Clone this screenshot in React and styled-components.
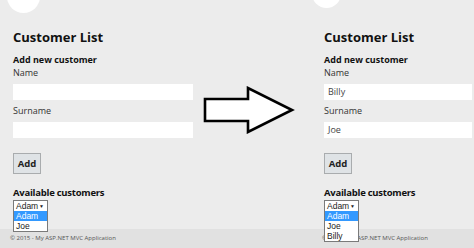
import React from 'react';
import styled, { createGlobalStyle } from 'styled-components';

const GlobalStyle = createGlobalStyle`
  html, body {
    margin: 0;
    padding: 0;
    background: #ececec;
  }
  body {
    font-family: "Open Sans", "Noto Sans", sans-serif;
    color: #111;
  }
`;

const Page = styled.div`
  display: grid;
  grid-template-columns: 200px 111px 1fr;
  grid-template-rows: 229px 19px;
  width: 474px;
  height: 248px;
  overflow: hidden;
  background: #ececec;
`;

const Panel = styled.div`
  display: flex;
  flex-direction: column;
  padding: 0 13px;
  position: relative;
  min-width: 0;
`;

const Header = styled.div`
  height: 13px;
  margin: 0 -13px;
  padding: 0 13px;
  overflow: hidden;
  flex-shrink: 0;
  display: flow-root;
`;

const Circle = styled.div`
  width: ${(p) => p.$size}px;
  height: ${(p) => p.$size}px;
  border-radius: 50%;
  background: #ffffff;
  margin-left: ${(p) => p.$x}px;
  margin-top: ${(p) => p.$y}px;
`;

const Title = styled.h2`
  margin: 16px 0 0;
  font-size: 13px;
  line-height: 16px;
  font-weight: 700;
  color: #111;
`;

const SubTitle = styled.h4`
  margin: 9px 0 0;
  font-size: 9px;
  line-height: 12px;
  font-weight: 700;
  color: #111;
`;

const Label = styled.label`
  margin-top: ${(p) => p.$top}px;
  font-size: 9px;
  line-height: 12px;
  color: #333;
`;

const Input = styled.div`
  margin-top: 5px;
  width: ${(p) => p.$width}px;
  height: 16px;
  background: #ffffff;
  font-size: 9px;
  line-height: 16px;
  padding-left: 4px;
  box-sizing: border-box;
  color: #444;
`;

const Button = styled.button`
  margin-top: 15px;
  width: 28px;
  height: 21px;
  padding: 0;
  border: 1px solid #a9acae;
  background: #dfe3e6;
  font-family: "Open Sans", "Noto Sans", sans-serif;
  font-size: 9.5px;
  font-weight: 700;
  color: #222;
`;

const ListTitle = styled.h4`
  margin: 12px 0 0;
  font-size: 9.5px;
  letter-spacing: -0.25px;
  line-height: 13px;
  font-weight: 700;
  color: #111;
`;

const SelectWrap = styled.div`
  position: relative;
  margin-top: 1px;
  width: ${(p) => p.$width}px;
`;

const SelectBox = styled.div`
  display: flex;
  align-items: center;
  justify-content: space-between;
  height: 10px;
  border: 1px solid #7a7a7a;
  background: #fff;
  padding: 0 3px 0 2px;
  font-family: "Liberation Sans", Arial, sans-serif;
  font-size: 8.5px;
  color: #222;
  box-sizing: content-box;
`;

const Caret = styled.span`
  font-size: 5px;
`;

const OptionList = styled.ul`
  position: absolute;
  top: 11px;
  left: 0;
  right: 0;
  margin: 0;
  padding: 0;
  list-style: none;
  background: #fff;
  border: 1px solid #7a7a7a;
  border-top: none;
  z-index: 2;
`;

const Option = styled.li`
  height: 10px;
  line-height: 10px;
  padding-left: 2px;
  font-family: "Liberation Sans", Arial, sans-serif;
  font-size: 8.5px;
  color: ${(p) => (p.$active ? '#fff' : '#222')};
  background: ${(p) => (p.$active ? '#3399ff' : '#fff')};
`;

const ArrowCol = styled.div`
  padding-top: 86px;
`;

const FooterCell = styled.div`
  background: #e1e1e1;
  font-size: 6px;
  line-height: 19px;
  color: #555;
  padding-left: ${(p) => p.$pad || 0}px;
  white-space: nowrap;
  overflow: hidden;
`;

const Arrow = () => (
  <svg width="100" height="48" viewBox="0 0 100 48">
    <polygon
      points="5,13 48,13 48,2 92,24 48,46 48,35 5,35"
      fill="#fff"
      stroke="#000"
      strokeWidth="2.6"
      strokeLinejoin="miter"
    />
  </svg>
);

const CustomerForm = ({ circle, inputWidth, name, surname, customers }) => (
  <Panel>
    <Header>
      <Circle $size={circle.size} $x={circle.x} $y={circle.y} />
    </Header>
    <Title>Customer List</Title>
    <SubTitle>Add new customer</SubTitle>
    <Label $top={1}>Name</Label>
    <Input $width={inputWidth}>{name}</Input>
    <Label $top={5}>Surname</Label>
    <Input $width={inputWidth}>{surname}</Input>
    <div>
      <Button>Add</Button>
    </div>
    <ListTitle>Available customers</ListTitle>
    <SelectWrap $width={35}>
      <SelectBox>
        <span>{customers[0]}</span>
        <Caret>▼</Caret>
      </SelectBox>
      <OptionList>
        {customers.map((c, i) => (
          <Option key={c} $active={i === 0}>
            {c}
          </Option>
        ))}
      </OptionList>
    </SelectWrap>
  </Panel>
);

export default function App() {
  return (
    <>
      <GlobalStyle />
      <Page>
        <CustomerForm
          circle={{ size: 33, x: -6, y: -20 }}
          inputWidth={180}
          name=""
          surname=""
          customers={['Adam', 'Joe']}
        />
        <ArrowCol>
          <Arrow />
        </ArrowCol>
        <CustomerForm
          circle={{ size: 29, x: -12, y: -21 }}
          inputWidth={148}
          name="Billy"
          surname="Joe"
          customers={['Adam', 'Joe', 'Billy']}
        />
        <FooterCell $pad={10}>© 2015 - My ASP.NET MVC Application</FooterCell>
        <FooterCell />
        <FooterCell $pad={11}>© 2015 - My ASP.NET MVC Application</FooterCell>
      </Page>
    </>
  );
}
